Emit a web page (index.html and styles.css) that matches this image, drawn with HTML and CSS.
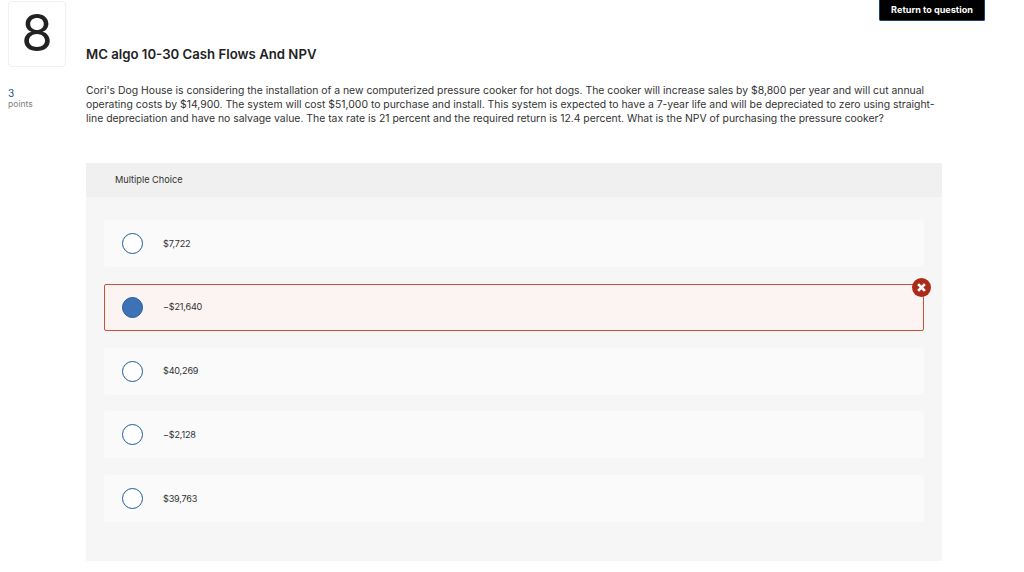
FILE: index.html
```html
<!DOCTYPE html>
<html lang="en">
<head>
    <meta charset="UTF-8">
    <meta name="viewport" content="width=device-width, initial-scale=1.0">
    <title>MC algo 10-30 Cash Flows And NPV</title>
    <link rel="stylesheet" href="styles.css">
</head>
<body>
    <div class="top-bar">
        <button type="button" class="return-btn">Return to question</button>
    </div>

    <div class="question-head">
        <div class="number-box">8</div>
        <h1 class="title">MC algo 10-30 Cash Flows And NPV</h1>
    </div>

    <div class="question-body">
        <div class="points">
            <div class="points-value">3</div>
            <div class="points-label">points</div>
        </div>
        <p class="prompt">Cori's Dog House is considering the installation of a new computerized pressure cooker for hot dogs. The cooker will increase sales by $8,800 per year and will cut annual operating costs by $14,900. The system will cost $51,000 to purchase and install. This system is expected to have a 7-year life and will be depreciated to zero using straight-line depreciation and have no salvage value. The tax rate is 21 percent and the required return is 12.4 percent. What is the NPV of purchasing the pressure cooker?</p>
    </div>

    <div class="panel">
        <div class="panel-head">Multiple Choice</div>
        <div class="options">
            <div class="option">
                <span class="radio"></span>
                <span class="option-text">$7,722</span>
            </div>
            <div class="option option-wrong">
                <span class="radio radio-on"></span>
                <span class="option-text">&minus;$21,640</span>
                <span class="wrong-badge">
                    <svg viewBox="0 0 18 18" width="19" height="19">
                        <circle cx="9" cy="9" r="9" fill="#ac2b18"/>
                        <path d="M5.8 5.8l6.4 6.4M12.2 5.8l-6.4 6.4" stroke="#fff" stroke-width="2.6" fill="none"/>
                    </svg>
                </span>
            </div>
            <div class="option">
                <span class="radio"></span>
                <span class="option-text">$40,269</span>
            </div>
            <div class="option">
                <span class="radio"></span>
                <span class="option-text">&minus;$2,128</span>
            </div>
            <div class="option">
                <span class="radio"></span>
                <span class="option-text">$39,763</span>
            </div>
        </div>
    </div>
</body>
</html>
```

FILE: styles.css
```css
body {
    font-family: Inter, "Liberation Sans", sans-serif;
    margin: 0;
    padding: 0;
    background-color: white;
    color: #333;
    overflow: hidden;
}
.top-bar {
    display: flex;
    justify-content: flex-end;
    height: 0;
    padding-right: 39px;
}
.return-btn {
    width: 106px;
    height: 21px;
    padding: 0 0 2px;
    background-color: black;
    color: white;
    font-family: inherit;
    font-size: 9.1px;
    font-weight: bold;
    border: 1px solid #1b3f77;
    border-top: none;
    border-radius: 0 0 2px 2px;
}
.question-head {
    display: flex;
    align-items: flex-end;
    gap: 20px;
    padding: 1px 0 0 8px;
}
.number-box {
    width: 58px;
    height: 66px;
    box-sizing: border-box;
    border: 1px solid #f0f0f0;
    border-radius: 4px;
    color: #222;
    font-size: 51px;
    line-height: 62px;
    text-align: center;
}
.title {
    margin: 0 0 5px;
    font-size: 13.2px;
    line-height: 16px;
    font-weight: 600;
    color: #222;
}
.question-body {
    display: flex;
    margin-top: 17px;
}
.points {
    width: 86px;
    padding-left: 8px;
    box-sizing: border-box;
}
.points-value {
    font-size: 10px;
    line-height: 12px;
    margin-top: 3px;
    color: #1b4f8f;
}
.points-label {
    font-size: 8.6px;
    line-height: 11px;
    color: #808080;
}
.prompt {
    width: 850px;
    margin: 0;
    font-size: 10.4px;
    line-height: 14px;
    color: #333;
}
.panel {
    width: 856px;
    height: 398px;
    margin: 37px 0 0 86px;
    background-color: #f6f6f6;
}
.panel-head {
    height: 34px;
    padding-left: 29px;
    background-color: #f0f0f0;
    font-size: 9.2px;
    line-height: 34px;
    color: #333;
}
.options {
    display: flex;
    flex-direction: column;
    gap: 16.8px;
    margin: 23px 18px 0 18px;
}
.option {
    position: relative;
    display: flex;
    align-items: center;
    height: 47px;
    box-sizing: border-box;
    padding-left: 18px;
    background-color: #fafafa;
    border-radius: 2px;
    font-size: 9.1px;
}
.option-text {
    letter-spacing: -0.2px;
    margin-top: -1px;
}
.option-wrong {
    background-color: #fcf3f3;
    border: 1px solid #c9503f;
    padding-left: 17px;
}
.radio {
    width: 21px;
    height: 21px;
    box-sizing: border-box;
    border: 1px solid #1b5a9a;
    border-radius: 50%;
    background-color: white;
    margin-right: 20px;
}
.radio-on {
    background-color: #3e72b7;
}
.wrong-badge {
    position: absolute;
    top: -7px;
    right: -8px;
    width: 19px;
    height: 19px;
}
.wrong-badge svg {
    display: block;
}
```
